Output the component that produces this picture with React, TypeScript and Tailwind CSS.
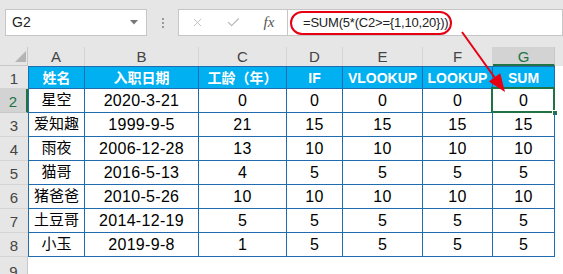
import { X, Check } from 'lucide-react';

const FONT = { fontFamily: '"Liberation Sans", "Noto Sans CJK SC", sans-serif' };

const COLS = ['A', 'B', 'C', 'D', 'E', 'F', 'G'];
const HEAD = ['姓名', '入职日期', '工龄（年）', 'IF', 'VLOOKUP', 'LOOKUP', 'SUM'];
const ROWS = [
  ['星空', '2020-3-21', '0', '0', '0', '0', '0'],
  ['爱知趣', '1999-9-5', '21', '15', '15', '15', '15'],
  ['雨夜', '2006-12-28', '13', '10', '10', '10', '10'],
  ['猫哥', '2016-5-13', '4', '5', '5', '5', '5'],
  ['猪爸爸', '2010-5-26', '10', '10', '10', '10', '10'],
  ['土豆哥', '2014-12-19', '5', '5', '5', '5', '5'],
  ['小玉', '2019-9-8', '1', '5', '5', '5', '5'],
];

function TopBar() {
  return (
    <div className="flex h-[47px] bg-[#e6e6e6] pl-[5px] pt-[9px]">
      <div className="flex h-[27px] w-[142px] items-center justify-between border border-[#c6c6c6] bg-white pl-[6px] pr-[8px] text-[14px] text-[#222]">
        <span>G2</span>
        <svg width="8" height="5" viewBox="0 0 8 5">
          <path d="M0 0 L8 0 L4 4.5 Z" fill="#777" />
        </svg>
      </div>
      <div className="flex w-[31px] flex-col items-center gap-[2px] pt-[9px]">
        <span className="h-[2px] w-[2px] bg-[#9a9a9a]" />
        <span className="h-[2px] w-[2px] bg-[#9a9a9a]" />
        <span className="h-[2px] w-[2px] bg-[#9a9a9a]" />
      </div>
      <div className="flex h-[27px] w-[110px] items-center border border-[#c6c6c6] bg-white">
        <span className="flex w-[36px] justify-center">
          <X size={13} strokeWidth={1.6} color="#b8b8b8" />
        </span>
        <span className="flex w-[36px] justify-center">
          <Check size={15} strokeWidth={1.8} color="#b8b8b8" />
        </span>
        <span
          className="flex w-[36px] justify-center text-[15px] italic text-[#555]"
          style={{ fontFamily: '"Liberation Serif", serif' }}
        >
          fx
        </span>
      </div>
      <div className="flex h-[27px] flex-1 items-center border-y border-r border-[#c6c6c6] bg-white pl-[2px]">
        <span className="flex h-[24px] items-center rounded-[12px] border-2 border-[#e60012] pl-[11px] pr-[2px] text-[13px] tracking-[-0.2px] text-[#222]">
          =SUM(5*(C2&gt;={'{'}1,10,20{'}'}))
        </span>
      </div>
    </div>
  );
}

function Sheet() {
  return (
    <div className="grid grid-cols-[28px_57px_114px_88px_56px_80px_70px_62px_1fr] grid-rows-[19px_23px_repeat(8,24px)] bg-white">
      {/* column headers */}
      <div className="relative border-b border-r border-[#c8c8c8] bg-[#e6e6e6]">
        <svg className="absolute left-[15px] top-[4px]" width="11" height="11" viewBox="0 0 11 11">
          <path d="M11 0 L11 11 L0 11 Z" fill="#b4b4b4" />
        </svg>
      </div>
      {COLS.map((c) =>
        c === 'G' ? (
          <div
            key={c}
            className="flex items-center justify-center border-b-2 border-r border-b-[#217346] border-r-[#c8c8c8] bg-[#d3d3d3] pt-[3px] text-[15px] text-[#217346]"
          >
            {c}
          </div>
        ) : (
          <div
            key={c}
            className="flex items-center justify-center border-r border-[#d4d4d4] bg-[#e6e6e6] pt-[2px] text-[15px] text-[#444]"
          >
            {c}
          </div>
        ),
      )}
      <div className="bg-[#e6e6e6]" />

      {/* row 1 header */}
      <div className="flex items-center justify-center border-b border-[#d4d4d4] bg-[#e6e6e6] pt-[5px] text-[15px] text-[#444]">
        1
      </div>
      {HEAD.map((h, i) => (
        <div
          key={h}
          className={
            'flex items-center justify-center border-y border-r border-[#1f6cb0] bg-[#00b0f0] pt-[2px] text-[14px] font-bold text-white' +
            (i === 0 ? ' border-l' : '')
          }
        >
          {h}
        </div>
      ))}
      <div />

      {ROWS.map((row, r) => {
        const n = r + 2;
        const sel = n === 2;
        return [
          <div
            key={'h' + n}
            className={
              sel
                ? 'flex items-center justify-center border-b border-r-2 border-b-[#c8c8c8] border-r-[#217346] bg-[#d3d3d3] pt-[4px] text-[15px] text-[#217346]'
                : 'flex items-center justify-center border-b border-[#d4d4d4] bg-[#e6e6e6] pt-[4px] text-[15px] text-[#444]'
            }
          >
            {n}
          </div>,
          ...row.map((v, i) => (
            <div
              key={n + '-' + i}
              className={
                'relative flex items-center justify-center border-b border-r border-[#1f6cb0] text-black' +
                (i === 0 ? ' border-l text-[15px]' : ' text-[16px] tracking-[0.3px]')
              }
            >
              {v}
              {sel && i === 6 && (
                <>
                  <div className="absolute -left-[2px] -top-[2px] h-[26px] w-[64px] border-2 border-[#217346]" />
                  <div className="absolute -bottom-[4px] -right-[4px] h-[6px] w-[6px] border border-white bg-[#217346]" />
                </>
              )}
            </div>
          )),
          <div key={'x' + n} />,
        ];
      })}

      {/* row 9 */}
      <div className="flex items-start justify-center border-r border-[#c8c8c8] bg-[#e6e6e6] pt-[4px] text-[15px] text-[#444]">
        9
      </div>
      <div className="col-span-8" />
    </div>
  );
}

export default function App() {
  return (
    <div className="relative h-[274px] w-[563px] overflow-hidden bg-white" style={FONT}>
      <TopBar />
      <Sheet />
      <svg className="pointer-events-none absolute left-0 top-0" width="563" height="274" viewBox="0 0 563 274">
        <line x1="462" y1="32" x2="495" y2="78" stroke="#e60012" strokeWidth="2" />
        <path d="M505 92 L488.8 81.5 L500.2 73.3 Z" fill="#e60012" />
      </svg>
    </div>
  );
}
